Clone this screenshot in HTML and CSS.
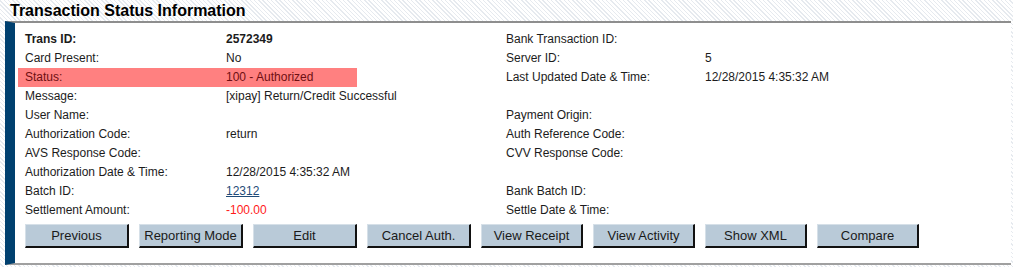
FILE: index.html
```html
<!DOCTYPE html>
<html lang="en">

<head>
    <meta charset="UTF-8">
    <title>Transaction Status Information</title>
    <link rel="stylesheet" href="styles.css">
</head>

<body>
    <h2 class="section-title">Transaction Status Information</h2>

    <div class="trans-box">
        <table class="trans-table">
            <colgroup>
                <col class="col-label">
                <col class="col-value">
                <col class="col-spacer">
                <col class="col-label2">
                <col>
            </colgroup>
            <tbody>
                <tr class="strong">
                    <td>Trans ID:</td>
                    <td>2572349</td>
                    <td></td>
                    <td class="normal">Bank Transaction ID:</td>
                    <td></td>
                </tr>
                <tr>
                    <td>Card Present:</td>
                    <td>No</td>
                    <td></td>
                    <td>Server ID:</td>
                    <td>5</td>
                </tr>
                <tr>
                    <td class="alert">Status:</td>
                    <td class="alert">100 - Authorized</td>
                    <td></td>
                    <td>Last Updated Date &amp; Time:</td>
                    <td>12/28/2015 4:35:32 AM</td>
                </tr>
                <tr>
                    <td>Message:</td>
                    <td>[xipay] Return/Credit Successful</td>
                    <td></td>
                    <td></td>
                    <td></td>
                </tr>
                <tr>
                    <td>User Name:</td>
                    <td></td>
                    <td></td>
                    <td>Payment Origin:</td>
                    <td></td>
                </tr>
                <tr>
                    <td>Authorization Code:</td>
                    <td>return</td>
                    <td></td>
                    <td>Auth Reference Code:</td>
                    <td></td>
                </tr>
                <tr>
                    <td>AVS Response Code:</td>
                    <td></td>
                    <td></td>
                    <td>CVV Response Code:</td>
                    <td></td>
                </tr>
                <tr>
                    <td>Authorization Date &amp; Time:</td>
                    <td>12/28/2015 4:35:32 AM</td>
                    <td></td>
                    <td></td>
                    <td></td>
                </tr>
                <tr>
                    <td>Batch ID:</td>
                    <td><a href="#" class="batch-link">12312</a></td>
                    <td></td>
                    <td>Bank Batch ID:</td>
                    <td></td>
                </tr>
                <tr>
                    <td>Settlement Amount:</td>
                    <td class="negative">-100.00</td>
                    <td></td>
                    <td>Settle Date &amp; Time:</td>
                    <td></td>
                </tr>
            </tbody>
        </table>

        <div class="actions">
            <button class="action-btn">Previous</button>
            <button class="action-btn">Reporting Mode</button>
            <button class="action-btn">Edit</button>
            <button class="action-btn">Cancel Auth.</button>
            <button class="action-btn narrow">View Receipt</button>
            <button class="action-btn narrow">View Activity</button>
            <button class="action-btn narrow">Show XML</button>
            <button class="action-btn narrow">Compare</button>
        </div>
    </div>
</body>

</html>
```

FILE: styles.css
```css
body {
    margin: 0;
    font-family: "Liberation Sans", Arial, sans-serif;
    font-size: 12px;
    color: #1c1c1c;
    background-color: #ffffff;
    background-image: repeating-linear-gradient(45deg, #ffffff 0, #ffffff 2px, #e6eaef 2px, #e6eaef 3px);
    height: 267px;
    overflow: hidden;
}

.section-title {
    margin: 0;
    padding: 1px 0 0 10px;
    height: 20px;
    font-size: 16px;
    line-height: 20px;
    font-weight: bold;
    color: #000;
}

.trans-box {
    margin: 0 2px 0 5px;
    padding: 7px 0 15px 3px;
    background: #fff;
    border-top: 2px solid #8e8e8e;
    border-bottom: 2px solid #a0a0a0;
    border-left: 10px solid #00406f;
}

.trans-table {
    width: 100%;
    table-layout: fixed;
    border-collapse: collapse;
}

.col-label {
    width: 201px;
}

.col-value {
    width: 138px;
}

.col-spacer {
    width: 142px;
}

.col-label2 {
    width: 199px;
}

.trans-table td {
    height: 19px;
    padding: 0 0 0 7px;
    line-height: 19px;
    white-space: nowrap;
    vertical-align: middle;
}

.strong td {
    font-weight: bold;
}

.strong td.normal {
    font-weight: normal;
}

.alert {
    background: #ff8080;
    color: #6e0f12;
}

.batch-link {
    color: #1f4b78;
    text-decoration: underline;
}

.negative {
    color: #ff1a1a;
}

.actions {
    display: flex;
    gap: 10px;
    margin-top: 4px;
    padding-left: 7px;
}

.action-btn {
    width: 104px;
    height: 24px;
    padding: 0;
    font-family: "Liberation Sans", Arial, sans-serif;
    font-size: 13px;
    color: #1a1a1a;
    background: #b9cad8;
    border-style: solid;
    border-width: 1px 2px 2px 1px;
    border-color: #d6e0e8 #111 #111 #d6e0e8;
    cursor: pointer;
}

.action-btn.narrow {
    width: 102px;
}
```
